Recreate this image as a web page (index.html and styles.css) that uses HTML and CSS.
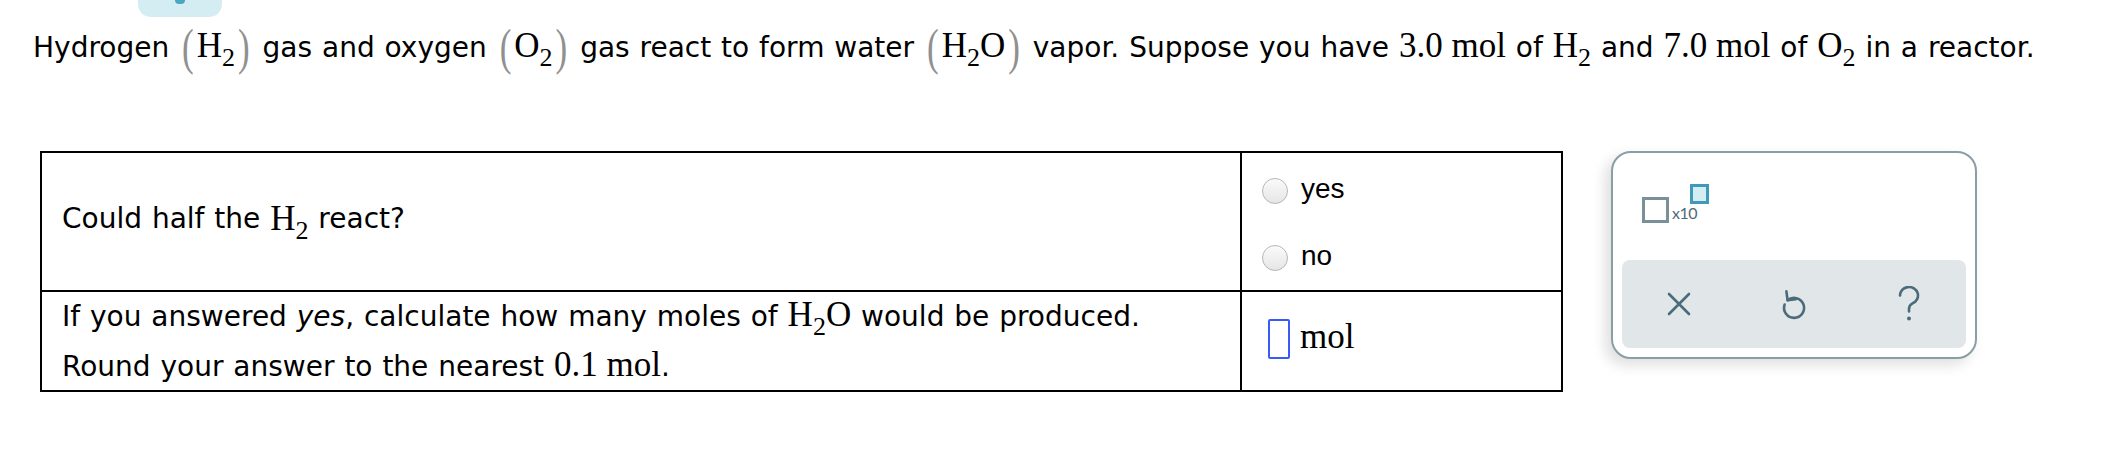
FILE: index.html
```html
<!DOCTYPE html>
<html>
<head>
<meta charset="utf-8">
<link rel="stylesheet" href="styles.css">
</head>
<body>
<div class="page">
  <div class="tab"><span class="tab-dot"></span></div>
  <p class="intro">Hydrogen <span class="grp"><span class="par">(</span><span class="m">H<sub>2</sub></span><span class="par">)</span></span> gas and oxygen <span class="grp"><span class="par">(</span><span class="m">O<sub>2</sub></span><span class="par">)</span></span> gas react to form water <span class="grp"><span class="par">(</span><span class="m">H<sub>2</sub>O</span><span class="par">)</span></span> vapor. Suppose you have <span class="m">3.0 mol</span> of <span class="m">H<sub>2</sub></span> and <span class="m">7.0 mol</span> of <span class="m">O<sub>2</sub></span> in a reactor.</p>
  <div class="work">
    <div class="qt">
      <div class="cell q1">Could half the <span class="m">H<sub>2</sub></span> react?</div>
      <div class="cell a1">
        <div class="opt"><span class="radio"></span><span class="lbl">yes</span></div>
        <div class="opt"><span class="radio"></span><span class="lbl">no</span></div>
      </div>
      <div class="cell q2">If you answered <i>yes</i>, calculate how many moles of <span class="m">H<sub>2</sub>O</span> would be produced.<br>Round your answer to the nearest <span class="m">0.1 mol</span>.</div>
      <div class="cell a2"><span class="box"></span><span class="unit">mol</span></div>
    </div>
    <div class="panel">
      <div class="panel-top">
        <div class="sci">
          <span class="sci-box"></span>
          <span class="sci-x">x10</span>
          <span class="sci-sup"></span>
        </div>
      </div>
      <div class="bar">
        <div class="btn">
          <svg width="24" height="24" viewBox="0 0 24 24"><path d="M2 2 L22 22 M22 2 L2 22" fill="none" stroke="#4c6b7a" stroke-width="2.6" stroke-linecap="round"/></svg>
        </div>
        <div class="btn">
          <svg width="28" height="32" viewBox="0 0 28 32"><path d="M7.6 12.2 A10 10 0 1 1 4.6 16.6" fill="none" stroke="#4c6b7a" stroke-width="2.6" stroke-linecap="round"/><path d="M6.4 3.4 L7.6 12.2 L15.8 11.2" fill="none" stroke="#4c6b7a" stroke-width="2.6" stroke-linecap="round" stroke-linejoin="round"/></svg>
        </div>
        <div class="btn">
          <svg width="24" height="36" viewBox="0 0 24 36"><path d="M3 9.5 A9 8.5 0 1 1 15.6 17.3 C13 18.6 12 20.2 12 23 V25.5" fill="none" stroke="#4c6b7a" stroke-width="2.6" stroke-linecap="round"/><circle cx="12" cy="32.5" r="2" fill="#4c6b7a"/></svg>
        </div>
      </div>
    </div>
  </div>
</div>
</body>
</html>
```
FILE: styles.css
```css
html, body {
  margin: 0;
  padding: 0;
  background: #fff;
}
.page {
  font-family: "DejaVu Sans", Verdana, sans-serif;
  font-size: 28px;
  word-spacing: 1px;
  color: #000;
}
.tab {
  margin-left: 138px;
  width: 84px;
  height: 17px;
  background: #d4edf2;
  border-radius: 0 0 13px 13px;
  display: flex;
  justify-content: center;
}
.tab-dot {
  width: 10px;
  height: 4px;
  background: #4aa6c1;
  border-radius: 0 0 5px 5px;
}
.intro {
  margin: 11px 0 0 0;
  padding-left: 33px;
  line-height: 40px;
  height: 40px;
  white-space: nowrap;
}
.m {
  font-family: "Liberation Serif", "Times New Roman", serif;
  font-size: 35px;
  line-height: 1;
  word-spacing: 0;
}
.m sub {
  font-size: 26px;
  vertical-align: -9px;
  line-height: 0;
}
.grp {
  white-space: nowrap;
}
.par {
  display: inline-block;
  font-family: "Liberation Serif", serif;
  font-size: 35px;
  color: #909090;
  transform: scaleY(1.45) translateY(1px);
  line-height: 1;
  margin: 0 3px;
}
.work {
  margin-top: 83px;
  padding-left: 40px;
  display: flex;
  align-items: flex-start;
}
.qt {
  display: grid;
  grid-template-columns: 1200px 319px;
  grid-template-rows: 139px 98px;
  border: 2px solid #000;
}
.cell {
  box-sizing: border-box;
}
.q1, .q2 {
  border-right: 2px solid #000;
  padding-left: 20px;
}
.q1, .a1 {
  border-bottom: 2px solid #000;
}
.q1 {
  display: flex;
  align-items: center;
  padding-bottom: 7px;
  white-space: pre;
}
.q2 {
  line-height: 50px;
  padding-top: 0;
}
.q2 .m {
  line-height: 0;
}
.a1 {
  padding: 25px 0 0 20px;
  display: flex;
  flex-direction: column;
  gap: 41px;
}
.opt {
  display: flex;
  align-items: center;
  height: 26px;
}
.radio {
  width: 24px;
  height: 24px;
  border-radius: 50%;
  border: 1px solid #b5b5b5;
  background: linear-gradient(#fafafa, #e6e6e6);
  box-shadow: inset 0 1px 1px rgba(255,255,255,0.8);
}
.lbl {
  font-family: "Liberation Sans", Arial, sans-serif;
  font-size: 28px;
  margin-left: 13px;
  line-height: 32px;
  margin-top: -4px;
}
.a2 {
  padding: 27px 0 0 26px;
  display: flex;
  align-items: flex-start;
}
.box {
  width: 18px;
  height: 36px;
  border: 2px solid #3a5cf6;
  border-radius: 2px;
}
.unit {
  font-family: "Liberation Serif", "Times New Roman", serif;
  font-size: 35px;
  line-height: 40px;
  margin-left: 10px;
  margin-top: -2px;
}
.panel {
  margin-left: 48px;
  width: 344px;
  border: 2px solid #8a9ea6;
  border-radius: 20px;
  box-shadow: -6px 6px 14px rgba(0, 0, 0, 0.13);
  background: #fff;
  padding: 0 9px 9px 9px;
  display: flex;
  flex-direction: column;
}
.panel-top {
  height: 107px;
  padding: 31px 0 0 20px;
  box-sizing: border-box;
}
.sci {
  display: flex;
  align-items: flex-start;
  height: 39px;
}
.sci-box {
  margin-top: 13px;
  width: 21px;
  height: 20px;
  border: 3px solid #7a9099;
}
.sci-x {
  font-family: "Lato", "Open Sans", sans-serif;
  font-size: 16px;
  color: #4f6a76;
  margin-top: 21px;
  margin-left: 3px;
  line-height: 16px;
  letter-spacing: -0.5px;
  word-spacing: 0;
}
.sci-sup {
  margin-left: -7px;
  width: 13px;
  height: 14px;
  border: 3px solid #3e9ab6;
  background: #d3edf3;
}
.bar {
  height: 88px;
  background: #e1e6e9;
  border-radius: 8px;
  display: grid;
  grid-template-columns: 1fr 1fr 1fr;
  align-items: center;
  justify-items: center;
}
.btn {
  display: flex;
  align-items: center;
  justify-content: center;
  height: 40px;
}
```
